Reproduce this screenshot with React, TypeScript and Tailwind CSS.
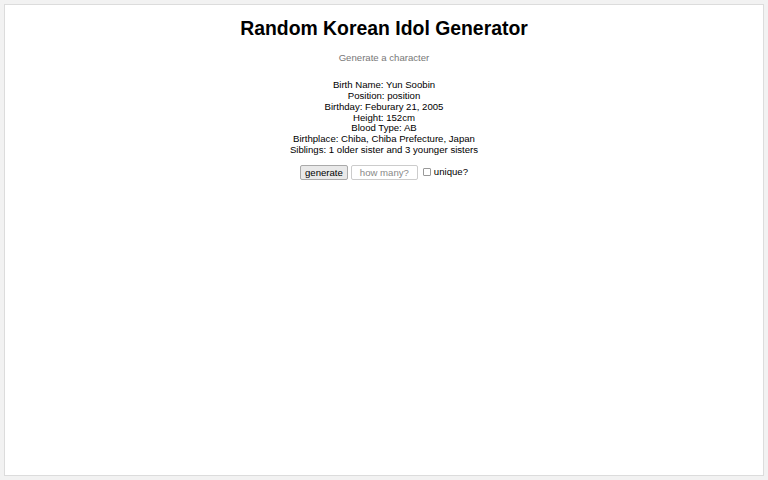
import React from "react";

const facts = [
  "Birth Name: Yun Soobin",
  "Position: position",
  "Birthday: Feburary 21, 2005",
  "Height: 152cm",
  "Blood Type: AB",
  "Birthplace: Chiba, Chiba Prefecture, Japan",
  "Siblings: 1 older sister and 3 younger sisters",
];

export default function App() {
  return (
    <div
      className="h-[480px] w-[768px] bg-[#f2f2f2] p-[4px]"
      style={{ fontFamily: '"Liberation Sans", Arial, sans-serif' }}
    >
      <div className="flex h-[472px] flex-col items-center border border-[#dcdcdc] bg-white">
        <h1 className="mt-[11px] text-[19.4px] font-bold leading-[24px] text-black">
          Random Korean Idol Generator
        </h1>
        <p className="mt-[12px] text-[9.6px] leading-[12px] text-[#777]">Generate a character</p>
        <div className="mt-[16px] flex flex-col items-center text-[9.6px] leading-[10.85px] text-black">
          {facts.map((f) => (
            <div key={f}>{f}</div>
          ))}
        </div>
        <div className="mt-[9px] flex items-center text-[9.6px] text-black">
          <button className="h-[15px] rounded-[2px] border border-[#aaa] bg-[#e9e9e9] px-[4px] text-[9.6px] leading-[13px]">
            generate
          </button>
          <input
            placeholder="how many?"
            className="ml-[3px] h-[15px] w-[67px] rounded-[2px] border border-[#ccc] text-center text-[9.6px] placeholder:text-[#888]"
          />
          <span className="ml-[5px] h-[8px] w-[8px] rounded-[1px] border border-[#999] bg-white" />
          <span className="ml-[3px]">unique?</span>
        </div>
      </div>
    </div>
  );
}
